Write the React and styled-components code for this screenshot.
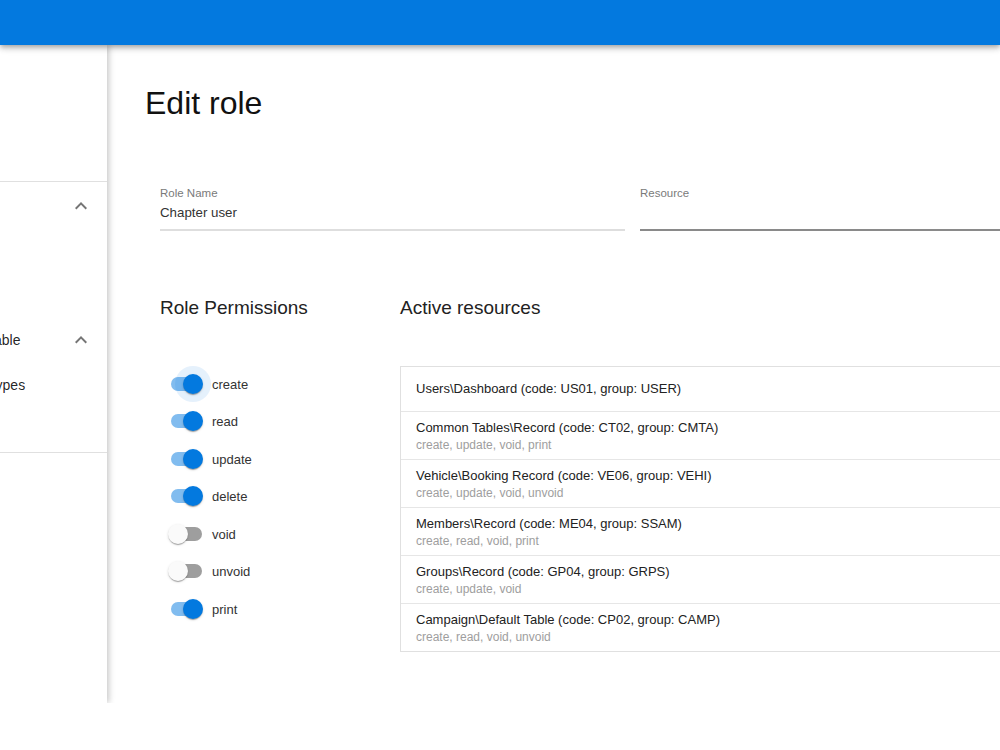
import React from 'react';
import styled, { createGlobalStyle } from 'styled-components';

const GlobalStyle = createGlobalStyle`
  html, body {
    margin: 0;
    padding: 0;
    background: #fff;
    overflow: hidden;
  }
  body {
    font-family: "Liberation Sans", Arial, Helvetica, sans-serif;
    color: rgba(0, 0, 0, 0.87);
  }
`;

const primary = '#0379df';

const AppBar = styled.header`
  height: 45px;
  background: ${primary};
  box-shadow: 0 2px 4px -1px rgba(0, 0, 0, 0.2), 0 4px 5px 0 rgba(0, 0, 0, 0.14),
    0 1px 10px 0 rgba(0, 0, 0, 0.12);
  position: relative;
  z-index: 3;
`;

const Layout = styled.div`
  display: flex;
  align-items: flex-start;
`;

const Drawer = styled.aside`
  flex: 0 0 107px;
  height: 658px;
  overflow: hidden;
  background: #fff;
  box-shadow: 2px 0 6px rgba(0, 0, 0, 0.22);
  position: relative;
  z-index: 2;
`;

// the drawer is partly slid off the left edge of the screen
const DrawerInner = styled.div`
  width: 240px;
  margin-left: -133px;
`;

const DrawerHead = styled.div`
  height: 136px;
`;

const Divider = styled.hr`
  margin: 0;
  border: none;
  border-top: 1px solid #e0e0e0;
`;

const NavItem = styled.div`
  display: flex;
  align-items: center;
  height: ${p => p.h || 48}px;
  padding: 0 14px 0 72px;
  font-size: 14px;
  white-space: nowrap;
  color: rgba(0, 0, 0, 0.87);
`;

const NavText = styled.span`
  flex: 1;
`;

const Chevron = () => (
  <svg width="24" height="24" viewBox="0 0 24 24" fill="#757575">
    <path d="M12 8l-6 6 1.41 1.41L12 10.83l4.59 4.58L18 14z" />
  </svg>
);

const Main = styled.main`
  flex: 1;
  min-width: 0;
  overflow: hidden;
  padding: 40px 0 0 38px;
`;

const Title = styled.h1`
  margin: 0;
  font-size: 32px;
  line-height: 36px;
  font-weight: 400;
  color: #111;
`;

const Form = styled.div`
  display: grid;
  grid-template-columns: 465px 465px;
  column-gap: 15px;
  padding-left: 15px;
  margin-top: 64px;
  width: 960px;
`;

const Field = styled.div`
  display: flex;
  flex-direction: column;
  border-bottom: 2px solid ${p => (p.dark ? '#8a8a8a' : '#dedede')};
`;

const FieldLabel = styled.label`
  font-size: 11.5px;
  line-height: 16px;
  color: #7a7a7a;
`;

const FieldValue = styled.div`
  font-size: 13.3px;
  line-height: 20px;
  height: 20px;
  margin-top: 2px;
  padding-bottom: 6px;
  color: #333;
`;

const Columns = styled.div`
  display: flex;
  padding-left: 15px;
  margin-top: 65px;
`;

const PermCol = styled.section`
  flex: 0 0 240px;
`;

const ResCol = styled.section`
  flex: 0 0 705px;
`;

const Heading = styled.h2`
  margin: 0;
  font-size: 19px;
  line-height: 24px;
  font-weight: 400;
  color: #222;
`;

const SwitchList = styled.div`
  margin-top: 45px;
`;

const SwitchRow = styled.div`
  display: flex;
  align-items: center;
  height: 37.5px;
`;

const SwitchBox = styled.span`
  position: relative;
  flex: 0 0 52px;
  height: 38px;
`;

const Track = styled.span`
  position: absolute;
  left: 11px;
  top: 12px;
  width: 31px;
  height: 14px;
  border-radius: 7px;
  background: ${p => (p.on ? 'rgba(3, 121, 223, 0.5)' : 'rgba(0, 0, 0, 0.38)')};
`;

const Halo = styled.span`
  position: absolute;
  left: 15px;
  top: 1px;
  width: 36px;
  height: 36px;
  border-radius: 50%;
  background: rgba(3, 121, 223, 0.1);
`;

const Thumb = styled.span`
  position: absolute;
  top: 9px;
  left: ${p => (p.on ? 23 : 8)}px;
  width: 20px;
  height: 20px;
  border-radius: 50%;
  background: ${p => (p.on ? primary : '#fafafa')};
  box-shadow: 0 2px 1px -1px rgba(0, 0, 0, 0.2), 0 1px 1px 0 rgba(0, 0, 0, 0.14),
    0 1px 3px 0 rgba(0, 0, 0, 0.12);
`;

const SwitchLabel = styled.span`
  font-size: 13px;
  padding-top: 1px;
  color: #333;
`;

const ResList = styled.ul`
  list-style: none;
  margin: 46px 0 0;
  padding: 0;
  border: 1px solid #e0e0e0;
`;

const ResItem = styled.li`
  display: flex;
  flex-direction: column;
  justify-content: center;
  min-height: ${p => (p.single ? 44 : 48)}px;
  padding: 0 15px;
  box-sizing: border-box;
  border-top: ${p => (p.first ? 'none' : '1px solid #e6e6e6')};
`;

const Primary = styled.span`
  font-size: 13px;
  line-height: 18px;
  color: #222;
`;

const Secondary = styled.span`
  font-size: 12px;
  line-height: 16px;
  color: #9e9e9e;
`;

const permissions = [
  { name: 'create', on: true, focus: true },
  { name: 'read', on: true },
  { name: 'update', on: true },
  { name: 'delete', on: true },
  { name: 'void', on: false },
  { name: 'unvoid', on: false },
  { name: 'print', on: true },
];

const resources = [
  { title: 'Users\\Dashboard (code: US01, group: USER)', perms: '' },
  { title: 'Common Tables\\Record (code: CT02, group: CMTA)', perms: 'create, update, void, print' },
  { title: 'Vehicle\\Booking Record (code: VE06, group: VEHI)', perms: 'create, update, void, unvoid' },
  { title: 'Members\\Record (code: ME04, group: SSAM)', perms: 'create, read, void, print' },
  { title: 'Groups\\Record (code: GP04, group: GRPS)', perms: 'create, update, void' },
  { title: 'Campaign\\Default Table (code: CP02, group: CAMP)', perms: 'create, read, void, unvoid' },
];

const Switch = ({ on, focus }) => (
  <SwitchBox>
    <Track on={on} />
    {focus && <Halo />}
    <Thumb on={on} />
  </SwitchBox>
);

export default function App() {
  return (
    <>
      <GlobalStyle />
      <AppBar />
      <Layout>
        <Drawer>
          <DrawerInner>
            <DrawerHead />
            <Divider />
            <NavItem>
              <NavText>Users</NavText>
              <Chevron />
            </NavItem>
            <NavItem h={43}>
              <NavText>Roles</NavText>
            </NavItem>
            <NavItem h={43}>
              <NavText>List</NavText>
            </NavItem>
            <NavItem>
              <NavText>Default Table</NavText>
              <Chevron />
            </NavItem>
            <NavItem h={42}>
              <NavText>Vehicle Types</NavText>
            </NavItem>
            <NavItem h={46}>
              <NavText>Tags</NavText>
            </NavItem>
            <Divider />
          </DrawerInner>
        </Drawer>
        <Main>
          <Title>Edit role</Title>
          <Form>
            <Field>
              <FieldLabel>Role Name</FieldLabel>
              <FieldValue>Chapter user</FieldValue>
            </Field>
            <Field dark>
              <FieldLabel>Resource</FieldLabel>
              <FieldValue />
            </Field>
          </Form>
          <Columns>
            <PermCol>
              <Heading>Role Permissions</Heading>
              <SwitchList>
                {permissions.map(p => (
                  <SwitchRow key={p.name}>
                    <Switch on={p.on} focus={p.focus} />
                    <SwitchLabel>{p.name}</SwitchLabel>
                  </SwitchRow>
                ))}
              </SwitchList>
            </PermCol>
            <ResCol>
              <Heading>Active resources</Heading>
              <ResList>
                {resources.map((r, i) => (
                  <ResItem key={r.title} first={i === 0} single={!r.perms}>
                    <Primary>{r.title}</Primary>
                    {r.perms && <Secondary>{r.perms}</Secondary>}
                  </ResItem>
                ))}
              </ResList>
            </ResCol>
          </Columns>
        </Main>
      </Layout>
    </>
  );
}
